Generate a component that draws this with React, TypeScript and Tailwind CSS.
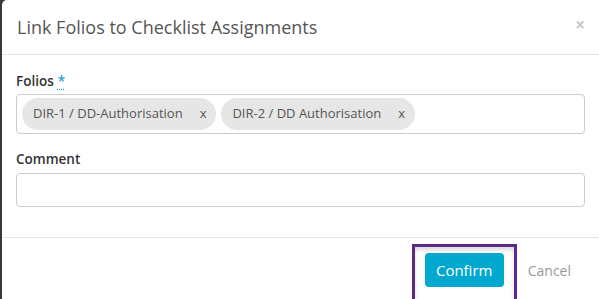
import React from 'react';

const folios = ['DIR-1 / DD-Authorisation', 'DIR-2 / DD Authorisation'];

export default function App() {
  return (
    <div className="h-[299px] w-[599px] overflow-hidden bg-[#3a3a3a] pl-[2px]" style={{ fontFamily: '"Open Sans", sans-serif' }}>
      <div className="h-[320px] w-[610px] rounded-[5px] bg-white">
        {/* header */}
        <div className="flex h-[55px] w-[599px] items-center justify-between border-b border-[#e5e5e5] pl-[15px] pr-[16px]">
          <h2 className="text-[18px] leading-none text-[#555]">Link Folios to Checklist Assignments</h2>
          <span className="mt-[-6px] text-[17px] font-bold leading-none text-[#c8c8c8]">×</span>
        </div>

        {/* body */}
        <div className="w-[597px] px-[14px] pt-[16px] pb-[30px]">
          <label className="flex items-start gap-1 text-[13.5px] font-semibold leading-[20px] text-[#333]">
            Folios
            <abbr className="text-[#1fa3d4] no-underline" style={{ textDecoration: 'underline dotted', textUnderlineOffset: '3px' }}>*</abbr>
          </label>
          <div className="mt-[3px] flex h-[40px] items-center gap-[5px] rounded-[4px] border border-[#ccc] px-[5px]">
            {folios.map((f) => (
              <span key={f} className="flex h-[32px] items-center gap-[17px] rounded-full bg-[#e6e6e6] pl-[11px] pr-[10px] text-[13px] text-[#555]">
                {f}
                <span className="text-[13px]">x</span>
              </span>
            ))}
          </div>

          <label className="mt-[15px] block text-[13.5px] font-semibold leading-[20px] text-[#333]">Comment</label>
          <div className="mt-[4px] h-[34px] rounded-[4px] border border-[#ccc]" />
        </div>

        {/* footer */}
        <div className="flex w-[597px] items-start justify-end border-t border-[#e5e5e5] pt-[6px] pr-[28px]">
          <div className="h-[60px] border-[3px] border-[#5b2a86] px-[10px] pt-[6px] shadow-[inset_0_3px_4px_rgba(0,0,0,0.15)]">
            <button className="h-[34px] w-[79px] rounded-[4px] bg-[#00a8cf] text-[15px] text-white">Confirm</button>
          </div>
          <button className="ml-[11px] mt-[9px] h-[34px] text-[14px] text-[#999]">Cancel</button>
        </div>
      </div>
    </div>
  );
}
